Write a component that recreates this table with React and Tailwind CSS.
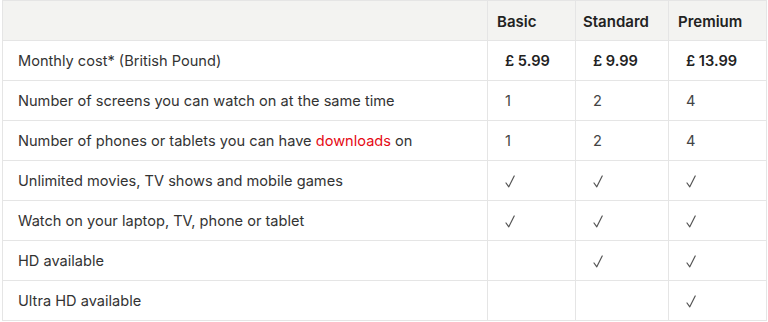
import React from 'react';

const Check = () => (
  <svg width="10" height="13" viewBox="0 0 10 13" className="inline-block align-middle">
    <path d="M1 8 L3.8 11.8 L9.2 1" fill="none" stroke="#555" strokeWidth="1.2" strokeLinecap="round" strokeLinejoin="round" />
  </svg>
);

const rows = [
  { label: 'Monthly cost* (British Pound)', values: ['£ 5.99', '£ 9.99', '£ 13.99'], bold: true },
  { label: 'Number of screens you can watch on at the same time', values: ['1', '2', '4'] },
  {
    label: (
      <>
        Number of phones or tablets you can have <span className="text-[#e50914]">downloads</span> on
      </>
    ),
    values: ['1', '2', '4'],
  },
  { label: 'Unlimited movies, TV shows and mobile games', values: [<Check />, <Check />, <Check />] },
  { label: 'Watch on your laptop, TV, phone or tablet', values: [<Check />, <Check />, <Check />] },
  { label: 'HD available', values: [null, <Check />, <Check />] },
  { label: 'Ultra HD available', values: [null, null, <Check />] },
];

const widths = ['w-[485px]', 'w-[88px]', 'w-[93px]', 'w-[98px]'];

export default function App() {
  return (
    <div className="w-[768px] h-[322px] bg-white pl-[2px] pr-[2px] font-['Inter',sans-serif] text-[14.6px] text-[#333]">
      <table className="border-collapse table-fixed w-[764px] border border-[#e5e5e5]">
        <thead>
          <tr className="h-[40px] bg-[#f3f3f1]">
            <th className={`${widths[0]} border border-[#e5e5e5]`}></th>
            <th className={`${widths[1]} border border-[#e5e5e5] text-left pl-[9px] pt-[3px] font-semibold text-[#222] text-[15px]`}>Basic</th>
            <th className={`${widths[2]} border border-[#e5e5e5] text-left pl-[7px] pt-[3px] font-semibold text-[#222] text-[15px]`}>Standard</th>
            <th className={`${widths[3]} border border-[#e5e5e5] text-left pl-[9px] pt-[3px] font-semibold text-[#222] text-[15px]`}>Premium</th>
          </tr>
        </thead>
        <tbody>
          {rows.map((row, i) => (
            <tr key={i} className="h-[40px]">
              <td className="border border-[#e5e5e5] pl-[15px] pt-[2px] text-[#333]">{row.label}</td>
              {row.values.map((v, j) => (
                <td
                  key={j}
                  className={`border border-[#e5e5e5] pl-[17px] pt-[2px] ${row.bold ? 'font-semibold text-[#222]' : 'text-[#444]'}`}
                >
                  {v}
                </td>
              ))}
            </tr>
          ))}
        </tbody>
      </table>
    </div>
  );
}
